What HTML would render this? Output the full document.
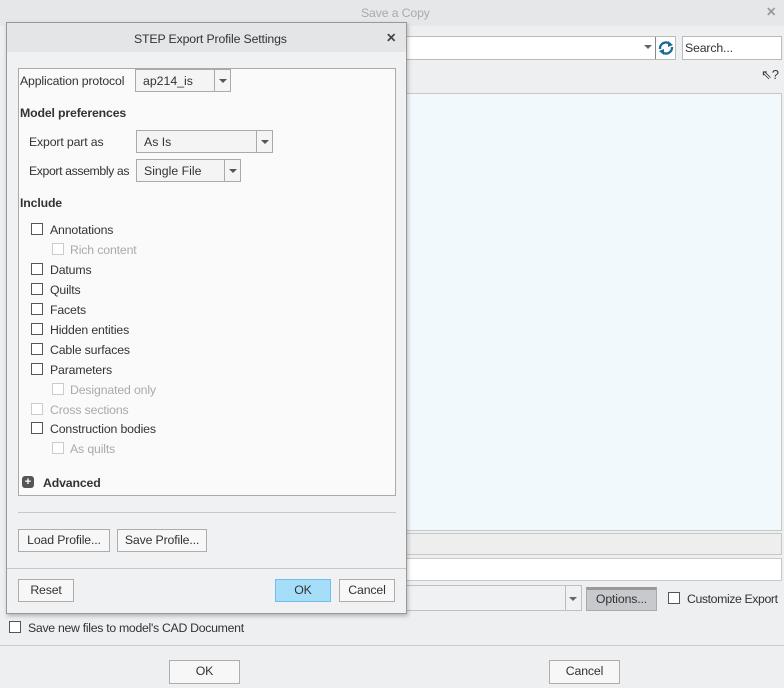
<!DOCTYPE html>
<html><head><style>
*{box-sizing:border-box;margin:0;padding:0}
body{width:784px;height:688px;background:#eeeff1;font-family:"Liberation Sans",sans-serif;font-size:12.3px;color:#333;position:relative;overflow:hidden}
.a{position:absolute}
.t{position:absolute;white-space:nowrap;letter-spacing:-0.15px;line-height:14px}
.cb{position:absolute;width:12px;height:12px;border:1px solid #555;background:#fff}
.cb.d{border-color:#ccc}
.dis{color:#aaa}
.btn{position:absolute;border:1px solid #adadad;background:#f7f7f7;text-align:center;line-height:20px;letter-spacing:-0.15px}
.dd{position:absolute;border:1px solid #aaa;background:#f4f4f4}
.dd span{position:absolute;left:7px;top:4px}
.dd i{position:absolute;right:0;top:0;bottom:0;width:16px;border-left:1px solid #aaa}
.dd i:after{content:"";position:absolute;left:4px;top:9px;border-left:4px solid transparent;border-right:4px solid transparent;border-top:4px solid #555}
</style></head><body>
<div class="a" style="left:0;top:0;width:784px;height:26px;background:#e6e7e9"></div>
<div class="t" style="left:361px;top:6px;color:#aaa">Save a Copy</div>
<div class="t" style="left:766px;top:5px;color:#999;font-weight:bold">✕</div>
<div class="a" style="left:400px;top:36px;width:276px;height:24px;background:#fff;border:1px solid #bbb"></div>
<div class="a" style="left:644px;top:45px;border-left:4px solid transparent;border-right:4px solid transparent;border-top:4px solid #666"></div>
<div class="a" style="left:655px;top:37px;width:1px;height:22px;background:#888"></div>
<svg class="a" style="left:657px;top:39px" width="18" height="18" viewBox="0 0 18 18"><path d="M3 10 A6 6 0 0 1 13 5" stroke="#1a6a96" stroke-width="2.4" fill="none"/><path d="M11 2 L16 6 L11 8Z" fill="#1a6a96"/><path d="M15 8 A6 6 0 0 1 5 13" stroke="#1a6a96" stroke-width="2.4" fill="none"/><path d="M7 16 L2 12 L7 10Z" fill="#1a6a96"/></svg>
<div class="a" style="left:682px;top:36px;width:100px;height:24px;background:#fff;border:1px solid #bbb"></div>
<div class="t" style="left:685px;top:41px;color:#333">Search...</div>
<div class="t" style="left:761px;top:68px;font-size:13px">⇖?</div>
<div class="a" style="left:400px;top:93px;width:382px;height:438px;background:#f2f9fc;border:1px solid #c8c8c8"></div>
<div class="a" style="left:400px;top:533px;width:382px;height:22px;background:#eeeeee;border:1px solid #c8c8c8"></div>
<div class="a" style="left:400px;top:558px;width:382px;height:23px;background:#fff;border:1px solid #c8c8c8"></div>
<div class="a" style="left:400px;top:585px;width:182px;height:26px;background:#f0f1f3;border:1px solid #c0c0c0"></div>
<div class="a" style="left:565px;top:586px;width:1px;height:24px;background:#bbb"></div>
<div class="a" style="left:569px;top:597px;border-left:4px solid transparent;border-right:4px solid transparent;border-top:4px solid #666"></div>
<div class="btn" style="left:586px;top:587px;width:71px;height:24px;background:#c8c9cc;border-color:#aaa;border-top:3px solid #999;line-height:18px">Options...</div>
<div class="cb" style="left:668px;top:592px"></div>
<div class="t" style="left:687px;top:592px;letter-spacing:-0.4px">Customize Export</div>
<div class="cb" style="left:9px;top:621px"></div>
<div class="t" style="left:28px;top:621px;letter-spacing:-0.3px">Save new files to model's CAD Document</div>
<div class="a" style="left:0;top:645px;width:784px;height:1px;background:#ccc"></div>
<div class="btn" style="left:169px;top:660px;width:71px;height:24px">OK</div>
<div class="btn" style="left:549px;top:660px;width:71px;height:24px">Cancel</div>
<div class="a" style="left:6px;top:22px;width:401px;height:592px;background:#f0f1f3;border:1px solid #999;box-shadow:1px 2px 4px rgba(0,0,0,.25)"></div>
<div class="a" style="left:7px;top:23px;width:399px;height:29px;background:#e3e5e7"></div>
<div class="t" style="left:134px;top:32px;color:#333">STEP Export Profile Settings</div>
<div class="t" style="left:386px;top:31px;font-weight:bold;color:#444">✕</div>
<div class="a" style="left:18px;top:68px;width:378px;height:428px;background:#fafafa;border:1px solid #aaa"></div>
<div class="t" style="left:20px;top:74px">Application protocol</div>
<div class="dd" style="left:135px;top:69px;width:96px;height:23px"><span>ap214_is</span><i></i></div>
<div class="t" style="left:20px;top:106px;font-weight:bold">Model preferences</div>
<div class="t" style="left:29px;top:135px">Export part as</div>
<div class="dd" style="left:136px;top:130px;width:137px;height:23px"><span>As Is</span><i></i></div>
<div class="t" style="left:29px;top:164px;letter-spacing:-0.4px">Export assembly as</div>
<div class="dd" style="left:136px;top:159px;width:105px;height:23px"><span>Single File</span><i></i></div>
<div class="t" style="left:20px;top:196px;font-weight:bold">Include</div>
<div class="cb" style="left:31px;top:223px"></div><div class="t" style="left:50px;top:223px">Annotations</div>
<div class="cb d" style="left:52px;top:243px"></div><div class="t dis" style="left:70px;top:243px">Rich content</div>
<div class="cb" style="left:31px;top:263px"></div><div class="t" style="left:50px;top:263px">Datums</div>
<div class="cb" style="left:31px;top:283px"></div><div class="t" style="left:50px;top:283px">Quilts</div>
<div class="cb" style="left:31px;top:303px"></div><div class="t" style="left:50px;top:303px">Facets</div>
<div class="cb" style="left:31px;top:323px"></div><div class="t" style="left:50px;top:323px">Hidden entities</div>
<div class="cb" style="left:31px;top:343px"></div><div class="t" style="left:50px;top:343px">Cable surfaces</div>
<div class="cb" style="left:31px;top:363px"></div><div class="t" style="left:50px;top:363px">Parameters</div>
<div class="cb d" style="left:52px;top:383px"></div><div class="t dis" style="left:70px;top:383px">Designated only</div>
<div class="cb d" style="left:31px;top:403px"></div><div class="t dis" style="left:50px;top:403px">Cross sections</div>
<div class="cb" style="left:31px;top:422px"></div><div class="t" style="left:50px;top:422px">Construction bodies</div>
<div class="cb d" style="left:52px;top:442px"></div><div class="t dis" style="left:70px;top:442px">As quilts</div>
<div class="a" style="left:22px;top:476px;width:12px;height:12px;border-radius:3px;background:#555;color:#fff;font-size:11px;line-height:12px;text-align:center;font-weight:bold">+</div>
<div class="t" style="left:43px;top:476px;font-weight:bold">Advanced</div>
<div class="a" style="left:18px;top:512px;width:378px;height:1px;background:#c8c8c8"></div>
<div class="btn" style="left:18px;top:529px;width:92px;height:23px">Load Profile...</div>
<div class="btn" style="left:117px;top:529px;width:90px;height:23px">Save Profile...</div>
<div class="a" style="left:7px;top:568px;width:399px;height:1px;background:#c8c8c8"></div>
<div class="btn" style="left:18px;top:579px;width:56px;height:23px">Reset</div>
<div class="btn" style="left:275px;top:579px;width:56px;height:23px;background:#a6defa;border-color:#6ec0ec">OK</div>
<div class="btn" style="left:339px;top:579px;width:56px;height:23px">Cancel</div>
</body></html>
